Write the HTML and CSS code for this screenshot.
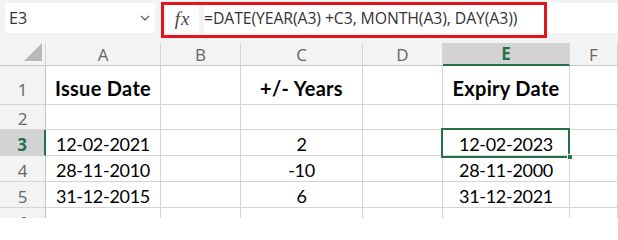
FILE: index.html
```html
<!DOCTYPE html>
<html>
<head>
<meta charset="utf-8">
<link rel="stylesheet" href="styles.css">
</head>
<body>
<div class="toolbar">
  <div class="namebox"><span class="ref">E3</span><svg class="chev" width="10" height="6" viewBox="0 0 10 6"><path d="M1 1 L5 5 L9 1" fill="none" stroke="#555" stroke-width="1.2"/></svg></div>
  <div class="fxbox"><span class="fx">fx</span></div>
  <div class="formula">=DATE(YEAR(A3) +C3, MONTH(A3), DAY(A3))</div>
  <div class="redbox"></div>
</div>
<div class="sheet">
  <div class="hd corner"><svg width="18" height="18" viewBox="0 0 18 18"><path d="M18 0 L18 18 L0 18 Z" fill="#b9b9b9"/></svg></div>
  <div class="hd col">A</div>
  <div class="hd col">B</div>
  <div class="hd col">C</div>
  <div class="hd col">D</div>
  <div class="hd col sel">E</div>
  <div class="hd col">F</div>

  <div class="hd row r1">1</div>
  <div class="c b r1">Issue Date</div>
  <div class="c r1"></div>
  <div class="c b r1">+/- Years</div>
  <div class="c r1"></div>
  <div class="c b r1">Expiry Date</div>
  <div class="c r1"></div>

  <div class="hd row">2</div>
  <div class="c"></div><div class="c"></div><div class="c"></div><div class="c"></div><div class="c"></div><div class="c"></div>

  <div class="hd row sel">3</div>
  <div class="c">12-02-2021</div>
  <div class="c"></div>
  <div class="c">2</div>
  <div class="c"></div>
  <div class="c active">12-02-2023<span class="selbox"></span><span class="handle"></span></div>
  <div class="c"></div>

  <div class="hd row">4</div>
  <div class="c">28-11-2010</div>
  <div class="c"></div>
  <div class="c">-10</div>
  <div class="c"></div>
  <div class="c">28-11-2000</div>
  <div class="c"></div>

  <div class="hd row">5</div>
  <div class="c">31-12-2015</div>
  <div class="c"></div>
  <div class="c">6</div>
  <div class="c"></div>
  <div class="c">31-12-2021</div>
  <div class="c"></div>

  <div class="hd row">6</div>
  <div class="c"></div><div class="c"></div><div class="c"></div><div class="c"></div><div class="c"></div><div class="c"></div>
</div>
</body>
</html>
```
FILE: styles.css
```css
* { box-sizing: border-box; }
html, body { margin: 0; padding: 0; background: #fff; overflow: hidden; }
body { width: 618px; height: 218px; font-family: "Open Sans", "Noto Sans", sans-serif; }

.toolbar {
  position: relative;
  height: 43px;
  background: #f3f3f3;
  display: flex;
  align-items: flex-start;
  padding-top: 3px;
  padding-left: 5px;
}
.namebox {
  width: 150px;
  height: 30px;
  background: #fff;
  display: flex;
  align-items: center;
  justify-content: space-between;
  padding: 0 5px 0 4px;
}
.ref { font-size: 16px; color: #333; }
.fxbox {
  margin-left: 11px;
  margin-top: 1px;
  width: 33px;
  height: 29px;
  background: #fff;
  display: flex;
  align-items: center;
  justify-content: center;
}
.fx {
  font-family: "Liberation Serif", serif;
  font-style: italic;
  font-size: 19px;
  color: #444;
  letter-spacing: 1px;
}
.formula {
  margin-left: 5px;
  flex: 1;
  height: 30px;
  background: #fff;
  font-size: 15.8px;
  letter-spacing: -0.1px;
  color: #333;
  line-height: 30px;
  padding-left: 0;
  white-space: nowrap;
}
.redbox {
  position: absolute;
  left: 161px;
  top: 2px;
  width: 386px;
  height: 36px;
  border: 3px solid #e2141c;
}

.sheet {
  display: grid;
  grid-template-columns: 46px 115px 80px 122px 80px 127px 48px;
  grid-template-rows: 23px 39px 25px 26px 26px 26px 26px;
}
.hd {
  background: #f3f3f3;
  color: #666;
  font-size: 17px;
  display: flex;
  align-items: center;
  justify-content: center;
}
.col { border-right: 1px solid #d4d4d4; border-bottom: 1px solid #c4c4c4; }
.corner { border-right: 1px solid #d4d4d4; border-bottom: 1px solid #c4c4c4; align-items: flex-end; justify-content: flex-end; padding: 0 3px 4px 0; }
.col.sel { background: #d3d3d3; color: #217346; font-weight: bold; border-bottom: 2px solid #217346; }
.row { border-right: 1px solid #c4c4c4; border-bottom: 1px solid #d4d4d4; padding-top: 3px; }
.row.r1 { align-items: flex-end; padding: 0 0 3px; }
.row.sel { background: #d3d3d3; color: #217346; font-weight: bold; border-right: 2px solid #217346; }

.c {
  border-right: 1px solid #d4d4d4;
  border-bottom: 1px solid #d4d4d4;
  font-family: "Lato", "Carlito", sans-serif;
  font-size: 18px;
  letter-spacing: -0.3px;
  color: #000;
  display: flex;
  align-items: flex-end;
  justify-content: center;
  padding-bottom: 2px;
  line-height: 1;
}
.c.b { font-weight: bold; font-size: 20px; letter-spacing: 0.3px; padding-bottom: 6px; }
.active { position: relative; }
.selbox {
  position: absolute;
  left: -2px; top: -2px; right: -1px; bottom: -3px;
  border: 2px solid #217346;
}
.handle {
  position: absolute;
  right: -4px; bottom: -5px;
  width: 6px; height: 6px;
  background: #217346;
  border: 1px solid #fff;
}
```
